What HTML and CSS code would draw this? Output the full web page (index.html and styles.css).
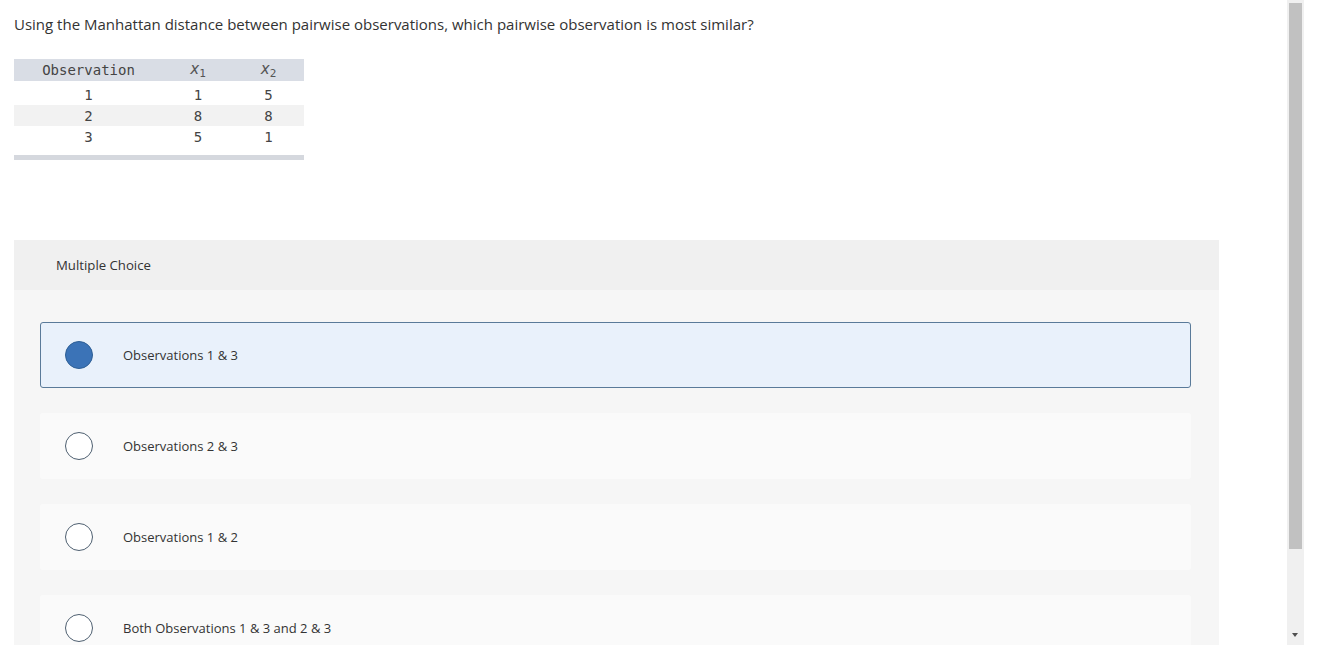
FILE: index.html
```html
<!DOCTYPE html>
<html>
<head>
<meta charset="utf-8">
<link rel="stylesheet" href="styles.css">
</head>
<body>
<div class="window">
  <div class="page">
    <p class="question">Using the Manhattan distance between pairwise observations, which pairwise observation is most similar?</p>
    <div class="table-wrap">
      <table class="data">
        <thead>
          <tr><th class="c1">Observation</th><th class="c2"><i>x</i><sub>1</sub></th><th class="c3"><i>x</i><sub>2</sub></th></tr>
        </thead>
        <tbody>
          <tr><td>1</td><td>1</td><td>5</td></tr>
          <tr class="alt"><td>2</td><td>8</td><td>8</td></tr>
          <tr><td>3</td><td>5</td><td>1</td></tr>
        </tbody>
      </table>
      <div class="table-foot"></div>
    </div>
    <section class="mc">
      <div class="mc-head">Multiple Choice</div>
      <div class="mc-body">
        <div class="choice selected"><span class="radio"></span><span class="label">Observations 1 &amp; 3</span></div>
        <div class="choice"><span class="radio"></span><span class="label">Observations 2 &amp; 3</span></div>
        <div class="choice"><span class="radio"></span><span class="label">Observations 1 &amp; 2</span></div>
        <div class="choice"><span class="radio"></span><span class="label">Both Observations 1 &amp; 3 and 2 &amp; 3</span></div>
      </div>
    </section>
  </div>
  <div class="scrollbar">
    <div class="thumb"></div>
    <div class="track"></div>
    <div class="arrow"></div>
  </div>
</div>
</body>
</html>
```

FILE: styles.css
```css
html, body {
  margin: 0;
  padding: 0;
  background: #ffffff;
}
body {
  font-family: "Open Sans", "Lato", sans-serif;
  color: #333333;
}
.window {
  display: flex;
  width: 1304px;
  height: 645px;
  overflow: hidden;
}
.page {
  flex: 0 0 1287px;
  box-sizing: border-box;
  padding-left: 14px;
  overflow: hidden;
}
.question {
  margin: 14px 0 0 0;
  font-size: 15px;
  line-height: 21px;
  color: #333;
}
.table-wrap {
  margin-top: 24px;
  width: 290px;
}
.data {
  width: 290px;
  border-collapse: collapse;
  font-family: "DejaVu Sans Mono", "Liberation Mono", monospace;
  font-size: 14px;
  color: #444;
}
.data th {
  background: #d9dde5;
  font-weight: normal;
  height: 22px;
  padding: 0;
  text-align: center;
}
.data th i {
  font-family: "DejaVu Sans", "Liberation Sans", sans-serif;
  font-style: italic;
  color: #555;
  font-size: 15px;
}
.data th sub {
  font-family: "DejaVu Sans Mono", monospace;
  font-size: 11px;
  vertical-align: -3px;
  color: #555;
}
.data .c1 { width: 149px; }
.data .c2 { width: 70px; }
.data .c3 { width: 71px; }
.data tbody tr:first-child td { padding-top: 3px; }
.data td {
  text-align: center;
  height: 21px;
  padding: 0;
}
.data tr.alt td {
  background: #f2f2f2;
}
.table-foot {
  margin-top: 8px;
  height: 5px;
  background: #d5d8de;
}
.mc {
  margin-top: 80px;
  width: 1205px;
  background: #f6f6f6;
}
.mc-head {
  height: 50px;
  background: #f0f0f0;
  padding-left: 42px;
  display: flex;
  align-items: center;
  font-size: 13.2px;
  color: #333;
}
.mc-body {
  padding: 32px 28px 0 26px;
  display: flex;
  flex-direction: column;
  gap: 25px;
}
.choice {
  height: 66px;
  box-sizing: border-box;
  background: #fafafa;
  border-radius: 3px;
  display: flex;
  align-items: center;
  padding-left: 25px;
  font-size: 13px;
  color: #333;
}
.choice.selected {
  background: #e9f1fb;
  border: 1px solid #5a7a99;
  padding-left: 24px;
}
.radio {
  width: 28px;
  height: 28px;
  box-sizing: border-box;
  border: 1.5px solid #4e5f70;
  border-radius: 50%;
  background: #fff;
  flex: 0 0 auto;
}
.choice.selected .radio {
  background: #3b73b7;
  border-color: #2e5f95;
}
.label {
  margin-left: 30px;
}
.scrollbar {
  flex: 0 0 17px;
  background: #f0f0f0;
  display: flex;
  flex-direction: column;
  position: relative;
}
.thumb {
  margin: 3px 2px 0 2px;
  height: 546px;
  background: #c1c1c1;
}
.track {
  flex: 1;
}
.arrow {
  position: absolute;
  left: 5px;
  bottom: 8px;
  width: 0;
  height: 0;
  border-left: 3.5px solid transparent;
  border-right: 3.5px solid transparent;
  border-top: 4px solid #505050;
}
```
